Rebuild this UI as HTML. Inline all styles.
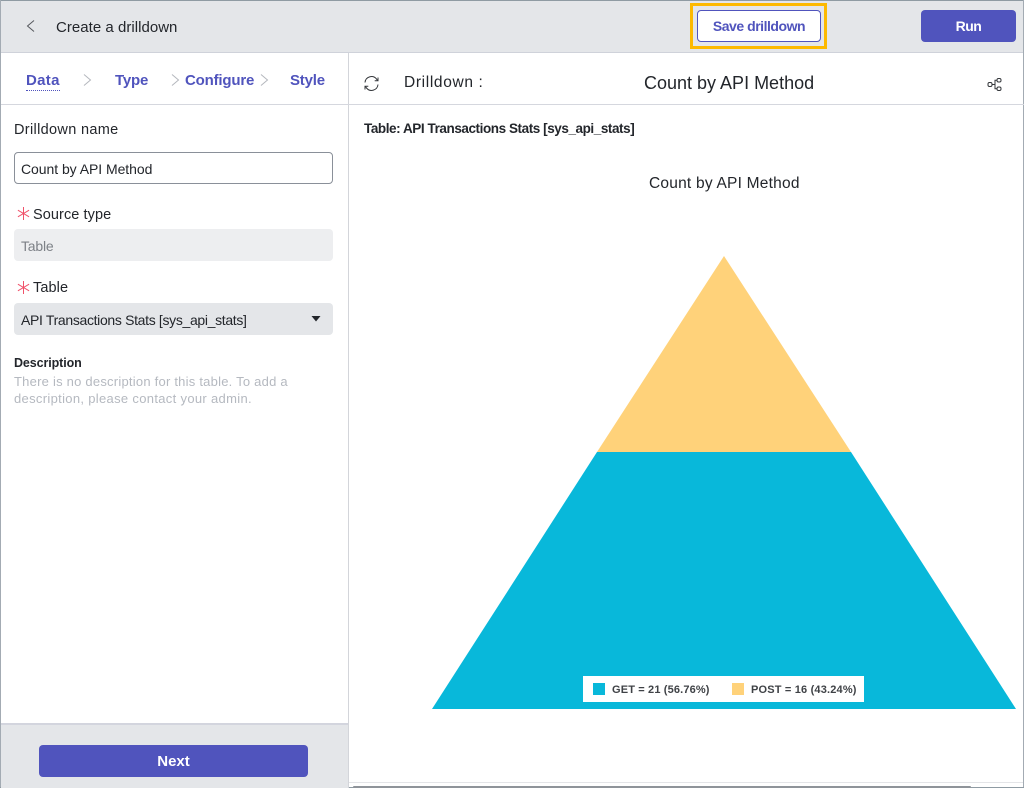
<!DOCTYPE html>
<html><head><meta charset="utf-8"><style>
html,body{margin:0;padding:0;width:1024px;height:788px;overflow:hidden;background:#fff}
body{position:relative;font-family:"Liberation Sans",sans-serif;color:#23262b}
.a{position:absolute;white-space:nowrap}
.t{position:absolute;white-space:nowrap;line-height:20px;height:20px}
.b{font-weight:bold}
.p{color:#5054bd}
</style></head><body>
<div class="a" style="left:0;top:0;width:1024px;height:53px;background:#e4e6e9;border-bottom:1px solid #cfd2da;box-sizing:border-box"></div>
<div class="a" style="left:0;top:0;width:1024px;height:1px;background:#8f9ba3"></div>
<div class="a" style="left:0;top:0;width:1px;height:788px;background:#a3abb3"></div>
<div class="a" style="left:1023px;top:0;width:1px;height:788px;background:#a3abb3"></div>
<div class="a" style="left:0;top:787px;width:1024px;height:1px;background:#8f9ba3"></div>
<svg class="a" style="left:24px;top:18px" width="14" height="16" viewBox="0 0 14 16"><path d="M10 2.500 3.500 8 10 13.500" fill="none" stroke="#55585d" stroke-width="1"/></svg>
<div class="t" style="left:56px;top:18px;font-size:15px;letter-spacing:.03px">Create a drilldown</div>
<div class="a" style="left:690px;top:3px;width:137px;height:46px;border:3px solid #fdb900;box-sizing:border-box"></div>
<div class="a" style="left:697px;top:10px;width:124px;height:32px;background:#fff;border:1px solid #5054bd;border-radius:4px;box-sizing:border-box"></div>
<div class="t b p" style="left:697px;top:16px;width:124px;text-align:center;font-size:14px;letter-spacing:-.47px">Save drilldown</div>
<div class="a" style="left:921px;top:10px;width:95px;height:32px;background:#5054bd;border-radius:4px"></div>
<div class="t b" style="left:921px;top:16px;width:95px;text-align:center;font-size:14px;color:#fff;letter-spacing:-.5px">Run</div>

<div class="a" style="left:348px;top:53px;width:1px;height:735px;background:#d3d5da"></div>
<div class="a" style="left:1px;top:104px;width:1023px;height:1px;background:#d5d7de"></div>

<div class="t b p" style="left:26px;top:71px;font-size:15px;letter-spacing:.3px">Data</div>
<div class="a" style="left:26px;top:90px;width:34px;border-top:1px dotted #5054bd"></div>
<svg class="a" style="left:83px;top:74px" width="9" height="12" viewBox="0 0 9 12"><path d="M1 .5 7.500 6 1 11.500" fill="none" stroke="#b4b7bd" stroke-width="1"/></svg>
<div class="t b p" style="left:115px;top:71px;font-size:15px;letter-spacing:-.2px">Type</div>
<svg class="a" style="left:171px;top:74px" width="9" height="12" viewBox="0 0 9 12"><path d="M1 .5 7.500 6 1 11.500" fill="none" stroke="#b4b7bd" stroke-width="1"/></svg>
<div class="t b p" style="left:185px;top:71px;font-size:15px;letter-spacing:-.18px">Configure</div>
<svg class="a" style="left:260px;top:74px" width="9" height="12" viewBox="0 0 9 12"><path d="M1 .5 7.500 6 1 11.500" fill="none" stroke="#b4b7bd" stroke-width="1"/></svg>
<div class="t b p" style="left:290px;top:71px;font-size:15px;letter-spacing:-.2px">Style</div>

<div class="t" style="left:14px;top:120px;font-size:14.5px;letter-spacing:.33px">Drilldown name</div>
<div class="a" style="left:14px;top:152px;width:319px;height:32px;background:#fff;border:1px solid #8a9099;border-radius:4px;box-sizing:border-box"></div>
<div class="t" style="left:21px;top:159px;font-size:14px;letter-spacing:-.05px">Count by API Method</div>

<svg class="a" style="left:16px;top:206px" width="15" height="15" viewBox="0 0 15 15"><path d="M7.500 1v13M1.900 4.200l11.200 6.600M13.100 4.200 1.900 10.800" stroke="#f0526a" stroke-width="1" fill="none"/></svg>
<div class="t" style="left:33px;top:205px;font-size:14.5px;letter-spacing:.08px">Source type</div>
<div class="a" style="left:14px;top:229px;width:319px;height:32px;background:#edeef0;border-radius:4px"></div>
<div class="t" style="left:21px;top:236px;font-size:14px;color:#7d8187;letter-spacing:-.2px">Table</div>

<svg class="a" style="left:16px;top:280px" width="15" height="15" viewBox="0 0 15 15"><path d="M7.500 1v13M1.900 4.200l11.200 6.600M13.100 4.200 1.900 10.800" stroke="#f0526a" stroke-width="1" fill="none"/></svg>
<div class="t" style="left:33px;top:278px;font-size:14.5px;letter-spacing:.1px">Table</div>
<div class="a" style="left:14px;top:303px;width:319px;height:32px;background:#e4e6e9;border-radius:4px"></div>
<div class="t" style="left:21px;top:310px;font-size:14px;letter-spacing:-.33px">API Transactions Stats [sys_api_stats]</div>
<svg class="a" style="left:311px;top:316px" width="10" height="6" viewBox="0 0 10 6"><path d="M.5 0h9L5 5.500z" fill="#23262b"/></svg>

<div class="t b" style="left:14px;top:353px;font-size:12.5px;letter-spacing:-.1px">Description</div>
<div class="t" style="left:14px;top:372px;font-size:13px;color:#b5b9c0;letter-spacing:.23px">There is no description for this table. To add a</div>
<div class="t" style="left:14px;top:389px;font-size:13px;color:#b5b9c0;letter-spacing:.32px">description, please contact your admin.</div>

<div class="a" style="left:1px;top:723px;width:347px;height:65px;background:#e4e6e9;border-top:2px solid #d3d5de;box-sizing:border-box"></div>
<div class="a" style="left:39px;top:745px;width:269px;height:32px;background:#5054bd;border-radius:4px"></div>
<div class="t b" style="left:39px;top:752px;width:269px;text-align:center;font-size:15px;color:#fff">Next</div>

<svg class="a" style="left:363px;top:75px" width="17" height="17" viewBox="0 0 17 17" fill="none" stroke="#33363a" stroke-width="1"><path d="M2 7.500A6.500 6.500 0 0 1 13.500 4l1 1.500M15 9.500A6.500 6.500 0 0 1 3.500 13l-1-1.500"/><path d="M15 2.500v3.300h-3.300M2 14.500v-3.300h3.300"/></svg>
<div class="t" style="left:404px;top:73px;font-size:15.5px;letter-spacing:.65px">Drilldown :</div>
<div class="t" style="left:644px;top:73px;font-size:18px;letter-spacing:0">Count by API Method</div>
<svg class="a" style="left:987px;top:77px" width="15" height="15" viewBox="0 0 15 15" fill="none" stroke="#33363a" stroke-width="1"><rect x="1" y="5.500" width="4" height="4" rx="1.500"/><rect x="10" y="1.500" width="4" height="3.500" rx="1.500"/><rect x="10" y="10" width="4" height="3.500" rx="1.500"/><path d="M5 7.500h3M10 3.200H8v8.600h2"/></svg>

<div class="t b" style="left:364px;top:119px;font-size:13.5px;letter-spacing:-.43px">Table: API Transactions Stats [sys_api_stats]</div>
<div class="t" style="left:649px;top:174px;font-size:15.5px;letter-spacing:.22px">Count by API Method</div>

<svg class="a" style="left:349px;top:240px" width="675" height="480" viewBox="349 240 675 480">
<polygon points="724,256 851,452 597,452" fill="#ffd27a"/>
<polygon points="597,452 851,452 1016,709 432,709" fill="#08b8da"/>
</svg>
<div class="a" style="left:583px;top:676px;width:281px;height:26px;background:#fff"></div>
<div class="a" style="left:593px;top:683px;width:12px;height:12px;background:#08b8da"></div>
<div class="t b" style="left:612px;top:680px;font-size:11px;color:#3f4246;letter-spacing:.15px">GET = 21 (56.76%)</div>
<div class="a" style="left:732px;top:683px;width:12px;height:12px;background:#ffd27a"></div>
<div class="t b" style="left:751px;top:680px;font-size:11px;color:#3f4246;letter-spacing:.18px">POST = 16 (43.24%)</div>

<div class="a" style="left:349px;top:782px;width:674px;height:1px;background:#e4e5e8"></div>
<div class="a" style="left:353px;top:786px;width:618px;height:2px;background:#8f949a;border-radius:1px"></div>
</body></html>
